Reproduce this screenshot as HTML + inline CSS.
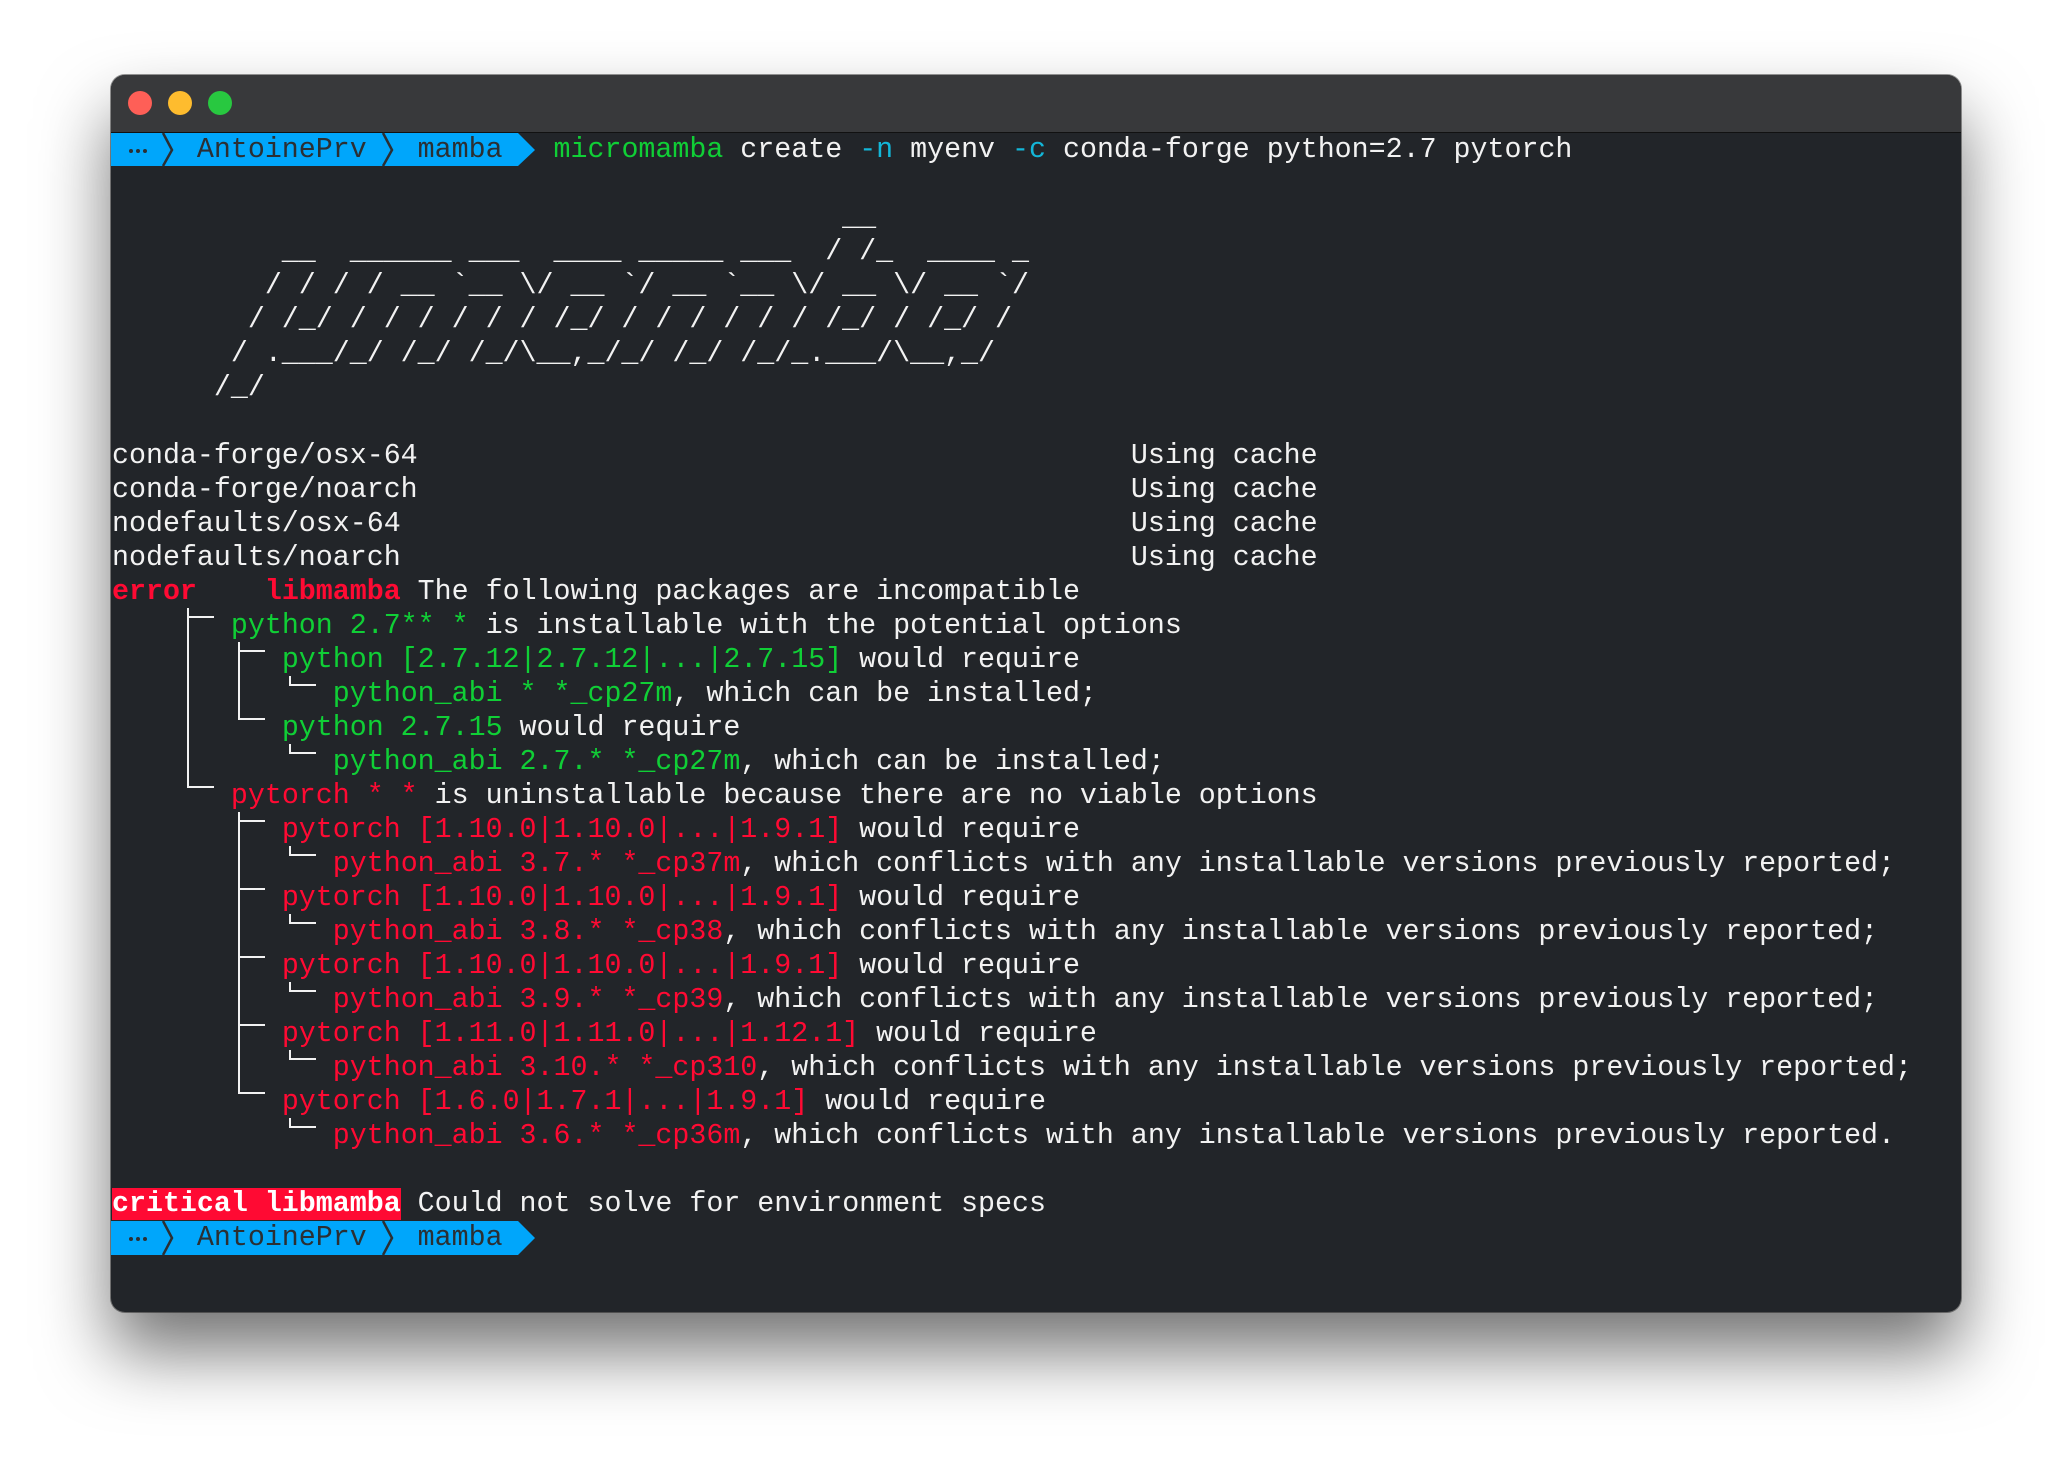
<!DOCTYPE html>
<html><head><meta charset="utf-8"><style>
html,body{margin:0;padding:0;background:#fff;width:2072px;height:1460px;overflow:hidden}
.win{position:absolute;left:111px;top:75px;width:1850px;height:1237px;background:#222529;border-radius:14px;overflow:hidden;box-shadow:0 40px 70px rgba(0,0,0,.55),0 0 0 1px rgba(0,0,0,.4)}
.tb{position:absolute;left:0;top:0;width:100%;height:57px;background:#38393b;border-bottom:1px solid #111}
.dot{position:absolute;top:16px;width:24px;height:24px;border-radius:50%}
pre{position:absolute;left:1px;top:58px;margin:0;font-family:"Liberation Mono",monospace;font-size:28.3px;line-height:34px;color:#f2f2f2;white-space:pre}
.g{color:#10cf36}.r{color:#ff0a33}.c{color:#13b6d8}.b{font-weight:bold}
.crit{background:#ff0a33;color:#fff;font-weight:bold}
.p{color:#2b2f33}
svg{position:absolute;left:0;top:0}
</style></head><body>
<div class="win">
<div class="tb">
<div class="dot" style="left:17px;background:#fe5f57"></div>
<div class="dot" style="left:57px;background:#febc2e"></div>
<div class="dot" style="left:97px;background:#28c840"></div>
</div>
<svg width="1850" height="1237">
<g fill="#00a6fb">
<polygon points="0,58 407,58 424,75 407,91 0,91"/>
<polygon points="0,1146 407,1146 424,1163 407,1180 0,1180"/>
</g>
<g stroke="#2b2f33" stroke-width="2.5" fill="none">
<polyline points="52,58 61,75 52,91"/><polyline points="272,58 281,75 272,91"/>
<polyline points="52,1146 61,1163 52,1180"/><polyline points="272,1146 281,1163 272,1180"/>
</g>
<g fill="#2b2f33">
<circle cx="20" cy="76" r="2"/><circle cx="27" cy="76" r="2"/><circle cx="34" cy="76" r="2"/>
<circle cx="20" cy="1164" r="2"/><circle cx="27" cy="1164" r="2"/><circle cx="34" cy="1164" r="2"/>
</g>
<g stroke="#f2f2f2" stroke-width="2" fill="none">
<polyline points="77,533 77,712 103,712"/>
<line x1="77" y1="542" x2="103" y2="542"/>
<polyline points="128,567 128,644 154,644"/>
<line x1="128" y1="576" x2="154" y2="576"/>
<polyline points="179,601 179,610 205,610"/>
<polyline points="179,669 179,678 205,678"/>
<polyline points="128,737 128,1018 154,1018"/>
<line x1="128" y1="746" x2="154" y2="746"/>
<line x1="128" y1="814" x2="154" y2="814"/>
<line x1="128" y1="882" x2="154" y2="882"/>
<line x1="128" y1="950" x2="154" y2="950"/>
<polyline points="179,771 179,780 205,780"/>
<polyline points="179,839 179,848 205,848"/>
<polyline points="179,907 179,916 205,916"/>
<polyline points="179,975 179,984 205,984"/>
<polyline points="179,1043 179,1052 205,1052"/>
</g>
</svg>
<pre><span class="p">     AntoinePrv   mamba</span>   <span class="g">micromamba</span> create <span class="c">-n</span> myenv <span class="c">-c</span> conda-forge python=2.7 pytorch

                                           __
          __  ______ ___  ____ _____ ___  / /_  ____ _
         / / / / __ `__ \/ __ `/ __ `__ \/ __ \/ __ `/
        / /_/ / / / / / / /_/ / / / / / / /_/ / /_/ /
       / .___/_/ /_/ /_/\__,_/_/ /_/ /_/_.___/\__,_/
      /_/

conda-forge/osx-64                                          Using cache
conda-forge/noarch                                          Using cache
nodefaults/osx-64                                           Using cache
nodefaults/noarch                                           Using cache
<span class="r b">error</span>    <span class="r b">libmamba</span> The following packages are incompatible
       <span class="g">python 2.7** *</span> is installable with the potential options
          <span class="g">python [2.7.12|2.7.12|...|2.7.15]</span> would require
             <span class="g">python_abi * *_cp27m</span>, which can be installed;
          <span class="g">python 2.7.15</span> would require
             <span class="g">python_abi 2.7.* *_cp27m</span>, which can be installed;
       <span class="r">pytorch * *</span> is uninstallable because there are no viable options
          <span class="r">pytorch [1.10.0|1.10.0|...|1.9.1]</span> would require
             <span class="r">python_abi 3.7.* *_cp37m</span>, which conflicts with any installable versions previously reported;
          <span class="r">pytorch [1.10.0|1.10.0|...|1.9.1]</span> would require
             <span class="r">python_abi 3.8.* *_cp38</span>, which conflicts with any installable versions previously reported;
          <span class="r">pytorch [1.10.0|1.10.0|...|1.9.1]</span> would require
             <span class="r">python_abi 3.9.* *_cp39</span>, which conflicts with any installable versions previously reported;
          <span class="r">pytorch [1.11.0|1.11.0|...|1.12.1]</span> would require
             <span class="r">python_abi 3.10.* *_cp310</span>, which conflicts with any installable versions previously reported;
          <span class="r">pytorch [1.6.0|1.7.1|...|1.9.1]</span> would require
             <span class="r">python_abi 3.6.* *_cp36m</span>, which conflicts with any installable versions previously reported.

<span class="crit">critical libmamba</span> Could not solve for environment specs
<span class="p">     AntoinePrv   mamba</span></pre>
</div>
</body></html>
